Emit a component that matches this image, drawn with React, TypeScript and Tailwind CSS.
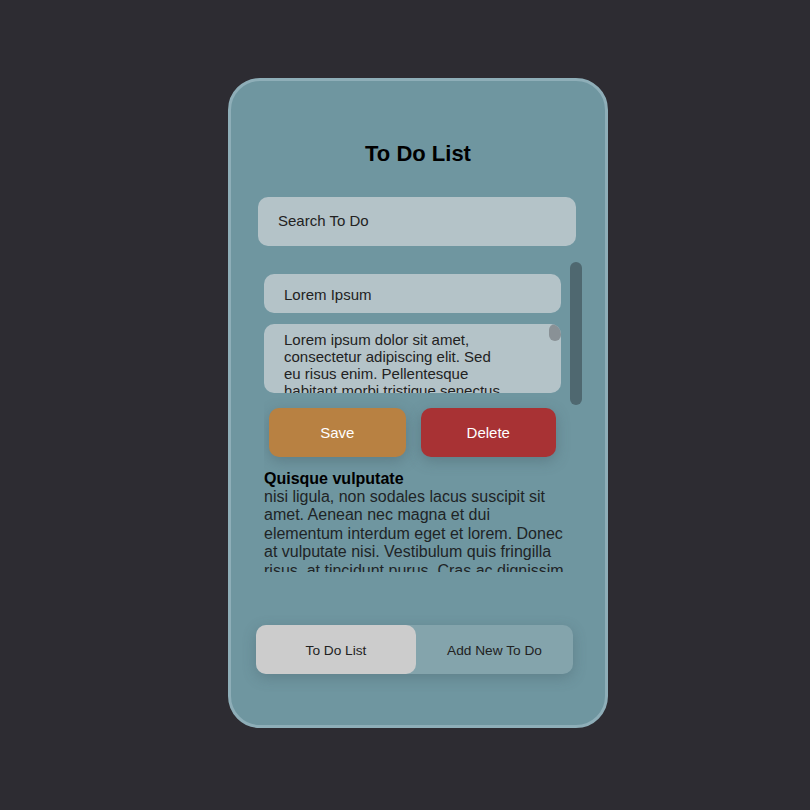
import React from 'react';

const App: React.FC = () => {
  return (
    <div className="min-h-screen bg-[#2d2c32] pl-[228px] pt-[78px] font-['Liberation_Sans',Arial,sans-serif]">
      <div className="w-[380px] h-[650px] rounded-[32px] border-[3px] border-[#8eaeb8] bg-[#6f96a0] flex flex-col">
        {/* Title */}
        <h1 className="mt-[60px] text-center text-[22px] leading-[25px] font-bold text-black">To Do List</h1>

        {/* Search */}
        <div className="mt-[31px] ml-[27px] w-[318px] h-[49px] rounded-[10px] bg-[#b4c3c8] flex items-center pl-[20px] text-[15px] text-[#222]">
          Search To Do
        </div>

        {/* List */}
        <div className="mt-[16px] ml-[33px] h-[310px] flex overflow-hidden">
          <div className="w-[297px] pt-[12px] flex flex-col">
            <div className="h-[39px] rounded-[10px] bg-[#b4c3c8] flex items-center pl-[20px] pt-[4px] text-[15px] text-[#222]">
              Lorem Ipsum
            </div>
            <div className="mt-[11px] h-[69px] rounded-[10px] bg-[#b4c3c8] flex overflow-hidden">
              <div className="pl-[20px] pt-[7px] w-[240px] text-[15px] leading-[17px] text-[#222]">
                Lorem ipsum dolor sit amet, consectetur adipiscing elit. Sed eu risus enim. Pellentesque habitant morbi tristique senectus et netus et malesuada fames.
              </div>
              <div className="ml-auto w-[12px] h-[17px] rounded-full bg-[#899196]" />
            </div>
            <div className="mt-[15px] flex gap-[15px] px-[5px]">
              <button className="w-[138px] h-[49px] pt-[3px] rounded-[10px] bg-[#b88142] text-white text-[15px] shadow-[0_4px_14px_rgba(60,80,90,0.35)]">
                Save
              </button>
              <button className="w-[137px] h-[49px] pt-[3px] rounded-[10px] bg-[#a83234] text-white text-[15px] shadow-[0_4px_14px_rgba(60,80,90,0.35)]">
                Delete
              </button>
            </div>
            <div className="mt-[13px] w-[303px] h-[103px] overflow-hidden text-[16px] leading-[18.4px] text-[#1e2426]">
              <p className="font-bold text-black">Quisque vulputate</p>
              <p>
                nisi ligula, non sodales lacus suscipit sit amet. Aenean nec magna et dui elementum interdum eget et lorem. Donec at vulputate nisi. Vestibulum quis fringilla risus, at tincidunt purus. Cras ac dignissim nunc.
              </p>
            </div>
          </div>
          <div className="ml-[9px] w-[12px] h-[143px] rounded-full bg-[#4f6870]" />
        </div>

        {/* Tabs */}
        <div className="mt-[53px] ml-[25px] w-[317px] h-[49px] rounded-[10px] bg-[#84a4ac] flex shadow-[0_4px_14px_rgba(60,80,90,0.3)]">
          <button className="w-[160px] h-full pt-[3px] rounded-[10px] bg-[#cccccc] text-[13.7px] text-[#222]">To Do List</button>
          <button className="flex-1 h-full pt-[3px] text-[13.7px] text-[#222]">Add New To Do</button>
        </div>
      </div>
    </div>
  );
};

export default App;
